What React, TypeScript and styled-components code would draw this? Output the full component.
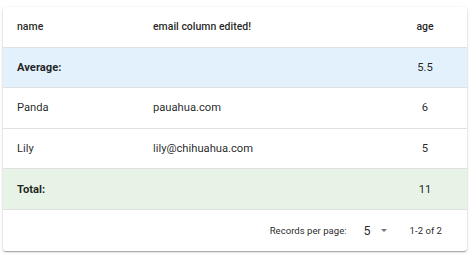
import React from "react";
import styled, { createGlobalStyle } from "styled-components";

const GlobalStyle = createGlobalStyle`
  html, body {
    margin: 0;
    padding: 0;
    background: #ffffff;
  }
  body {
    font-family: Roboto, "Liberation Sans", Arial, sans-serif;
    color: rgba(0, 0, 0, 0.87);
  }
`;

const Page = styled.div`
  padding: 7px 7px 8px 3px;
`;

const Card = styled.div`
  width: 464px;
  background: #fff;
  border-radius: 3px;
  box-shadow: 0 1px 3px rgba(0, 0, 0, 0.2), 0 1px 1px rgba(0, 0, 0, 0.14),
    0 2px 1px -1px rgba(0, 0, 0, 0.12);
  overflow: hidden;
`;

const Row = styled.div<{ $bg?: string; $head?: boolean }>`
  display: grid;
  grid-template-columns: 136px 244px 84px;
  height: 39.6px;
  align-items: center;
  background: ${(p) => p.$bg || "#fff"};
  border-bottom: 1px solid #e0e0e0;
  font-size: ${(p) => (p.$head ? "10.5px" : "11.2px")};
  font-weight: ${(p) => (p.$head ? 500 : 400)};
  color: rgba(0, 0, 0, 0.87);
`;

const Cell = styled.div<{ $center?: boolean; $bold?: boolean }>`
  padding-left: ${(p) => (p.$center ? "0" : "14px")};
  text-align: ${(p) => (p.$center ? "center" : "left")};
  font-weight: ${(p) => (p.$bold ? 700 : "inherit")};
  white-space: nowrap;
`;

const Footer = styled.div`
  height: 41px;
  display: flex;
  align-items: center;
  justify-content: flex-end;
  padding-right: 25px;
  font-size: 9.6px;
  color: rgba(0, 0, 0, 0.87);
`;

const PerPage = styled.span`
  margin-right: 17px;
`;

const Select = styled.span`
  display: inline-flex;
  align-items: center;
  font-size: 12.5px;
  margin-right: 23px;
`;

const Arrow = styled.span`
  width: 0;
  height: 0;
  margin-left: 10px;
  border-left: 3px solid transparent;
  border-right: 3px solid transparent;
  border-top: 3px solid rgba(0, 0, 0, 0.54);
`;

type RowData = { name: string; email: string; age: string; bg?: string; bold?: boolean };

const rows: RowData[] = [
  { name: "Average:", email: "", age: "5.5", bg: "#e3f1fc", bold: true },
  { name: "Panda", email: "pauahua.com", age: "6" },
  { name: "Lily", email: "lily@chihuahua.com", age: "5" },
  { name: "Total:", email: "", age: "11", bg: "#e6f3e6", bold: true },
];

export default function App() {
  return (
    <Page>
      <GlobalStyle />
      <Card>
        <Row $head>
          <Cell>name</Cell>
          <Cell>email column edited!</Cell>
          <Cell $center>age</Cell>
        </Row>
        {rows.map((r) => (
          <Row key={r.name} $bg={r.bg}>
            <Cell $bold={r.bold}>{r.name}</Cell>
            <Cell>{r.email}</Cell>
            <Cell $center>{r.age}</Cell>
          </Row>
        ))}
        <Footer>
          <PerPage>Records per page:</PerPage>
          <Select>
            5
            <Arrow />
          </Select>
          <span>1-2 of 2</span>
        </Footer>
      </Card>
    </Page>
  );
}
